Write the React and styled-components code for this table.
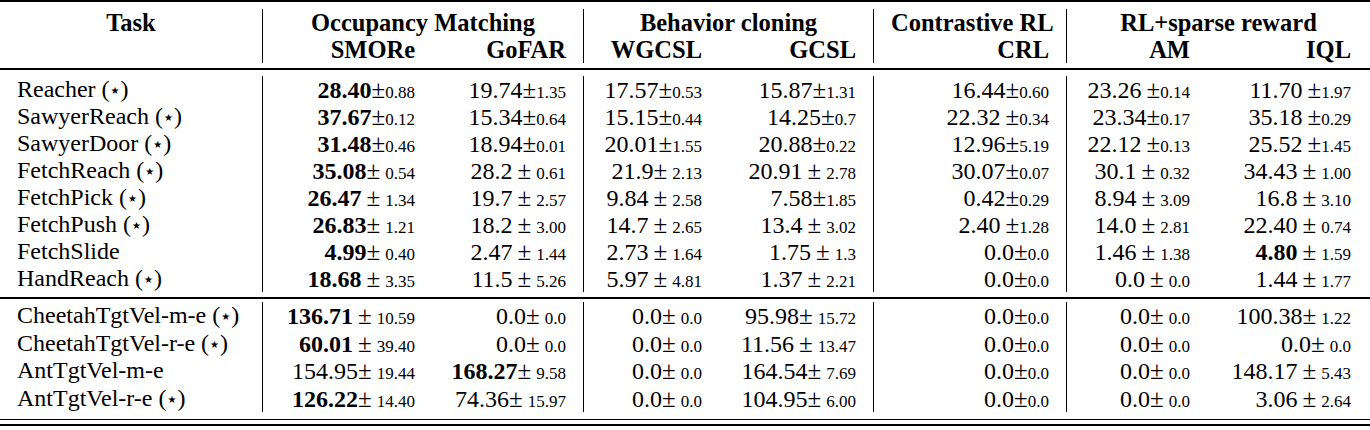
import styled, { createGlobalStyle } from 'styled-components';

const GlobalStyle = createGlobalStyle`
  html, body {
    margin: 0;
    padding: 0;
    background: #fff;
  }
`;

const COLS = '262px 170px 151px 136px 154px 193px 141px 163px';

const Page = styled.div`
  width: 1370px;
  height: 430px;
  background: #fff;
  color: #000;
  font-family: "Liberation Serif", "Times New Roman", serif;
  font-size: 24px;
`;

const Rule = styled.div`
  height: ${props => props.$h}px;
  margin-top: ${props => props.$mt}px;
  background: #000;
`;

const Section = styled.div`
  display: grid;
  grid-template-columns: ${COLS};
  grid-auto-rows: ${props => props.$rowH}px;
  margin-top: ${props => props.$mt}px;
`;

const Cell = styled.div`
  line-height: ${props => props.$rowH}px;
  white-space: nowrap;
  padding: 0 ${props => (props.$last ? 19 : 17)}px 0 17px;
  text-align: ${props => props.$align || 'right'};
  border-left: ${props => (props.$line ? '1px solid #000' : 'none')};
  grid-column: ${props => props.$span || 'auto'};
`;

const HeadCell = styled(Cell)`
  font-weight: bold;
  font-size: 24.5px;
`;

const Val = styled.span`
  font-weight: ${props => (props.$bold ? 'bold' : 'normal')};
`;

const Pm = styled.span`
  font-size: 25px;
  margin-left: ${props => (props.$pre ? 5 : 0)}px;
  margin-right: ${props => (props.$post ? 5 : 0)}px;
`;

const Std = styled.span`
  font-size: 17px;
`;

const Star = styled.span`
  display: inline-block;
  font-family: "DejaVu Sans", sans-serif;
  font-size: 10px;
  line-height: 1;
  vertical-align: 3px;
  margin: 0 1px;
`;

// column indices that carry a vertical rule on their left
const LINED = [1, 3, 5, 6];

const block1 = [
  ['Reacher', true, ['*28.40±0.88', '19.74±1.35', '17.57±0.53', '15.87±1.31', '16.44±0.60', '23.26 ±0.14', '11.70 ±1.97']],
  ['SawyerReach', true, ['*37.67±0.12', '15.34±0.64', '15.15±0.44', '14.25±0.7', '22.32 ±0.34', '23.34±0.17', '35.18 ±0.29']],
  ['SawyerDoor', true, ['*31.48±0.46', '18.94±0.01', '20.01±1.55', '20.88±0.22', '12.96±5.19', '22.12 ±0.13', '25.52 ±1.45']],
  ['FetchReach', true, ['*35.08± 0.54', '28.2 ± 0.61', '21.9± 2.13', '20.91 ± 2.78', '30.07±0.07', '30.1 ± 0.32', '34.43 ± 1.00']],
  ['FetchPick', true, ['*26.47 ± 1.34', '19.7 ± 2.57', '9.84 ± 2.58', '7.58±1.85', '0.42±0.29', '8.94 ± 3.09', '16.8 ± 3.10']],
  ['FetchPush', true, ['*26.83± 1.21', '18.2 ± 3.00', '14.7 ± 2.65', '13.4 ± 3.02', '2.40 ±1.28', '14.0 ± 2.81', '22.40 ± 0.74']],
  ['FetchSlide', false, ['*4.99± 0.40', '2.47 ± 1.44', '2.73 ± 1.64', '1.75 ± 1.3', '0.0±0.0', '1.46 ± 1.38', '*4.80 ± 1.59']],
  ['HandReach', true, ['*18.68 ± 3.35', '11.5 ± 5.26', '5.97 ± 4.81', '1.37 ± 2.21', '0.0±0.0', '0.0 ± 0.0', '1.44 ± 1.77']],
];

const block2 = [
  ['CheetahTgtVel-m-e', true, ['*136.71 ± 10.59', '0.0± 0.0', '0.0± 0.0', '95.98± 15.72', '0.0±0.0', '0.0± 0.0', '100.38± 1.22']],
  ['CheetahTgtVel-r-e', true, ['*60.01 ± 39.40', '0.0± 0.0', '0.0± 0.0', '11.56 ± 13.47', '0.0±0.0', '0.0± 0.0', '0.0± 0.0']],
  ['AntTgtVel-m-e', false, ['154.95± 19.44', '*168.27± 9.58', '0.0± 0.0', '164.54± 7.69', '0.0±0.0', '0.0± 0.0', '148.17 ± 5.43']],
  ['AntTgtVel-r-e', true, ['*126.22± 14.40', '74.36± 15.97', '0.0± 0.0', '104.95± 6.00', '0.0±0.0', '0.0± 0.0', '3.06 ± 2.64']],
];

const Score = ({ text }) => {
  const bold = text.startsWith('*');
  const [left, right] = (bold ? text.slice(1) : text).split('±');
  return (
    <>
      <Val $bold={bold}>{left.trim()}</Val>
      <Pm $pre={left.endsWith(' ')} $post={right.startsWith(' ')}>±</Pm>
      <Std>{right.trim()}</Std>
    </>
  );
};

const Body = ({ rows, rowH, mt }) => (
  <Section $rowH={rowH} $mt={mt}>
    {rows.map(([task, star, scores]) => [
      <Cell key={task} $rowH={rowH} $align="left">
        {task}
        {star && (
          <>
            {' ('}
            <Star>★</Star>
            {')'}
          </>
        )}
      </Cell>,
      ...scores.map((s, i) => (
        <Cell
          key={task + i}
          $rowH={rowH}
          $line={LINED.includes(i + 1)}
          $last={i === scores.length - 1}
        >
          <Score text={s} />
        </Cell>
      )),
    ])}
  </Section>
);

const subHeads = ['SMORe', 'GoFAR', 'WGCSL', 'GCSL', 'CRL', 'AM', 'IQL'];

const App = () => (
  <Page>
    <GlobalStyle />
    <Rule $h={2} $mt={0} />
    <Section $rowH={27} $mt={7}>
      <HeadCell $rowH={27} $align="center">Task</HeadCell>
      <HeadCell $rowH={27} $align="center" $line $span="span 2">Occupancy Matching</HeadCell>
      <HeadCell $rowH={27} $align="center" $line $span="span 2">Behavior cloning</HeadCell>
      <HeadCell $rowH={27} $align="center" $line>Contrastive RL</HeadCell>
      <HeadCell $rowH={27} $align="center" $line $span="span 2">RL+sparse reward</HeadCell>
      <HeadCell $rowH={27} />
      {subHeads.map((h, i) => (
        <HeadCell key={h} $rowH={27} $line={LINED.includes(i + 1)} $last={i === 6}>
          {h}
        </HeadCell>
      ))}
    </Section>
    <Rule $h={1.5} $mt={5} />
    <Body rows={block1} rowH={27} mt={6.5} />
    <Rule $h={1.5} $mt={5} />
    <Body rows={block2} rowH={27.5} mt={3.5} />
    <Rule $h={1.5} $mt={6.5} />
    <Rule $h={2} $mt={4} />
  </Page>
);

export default App;
